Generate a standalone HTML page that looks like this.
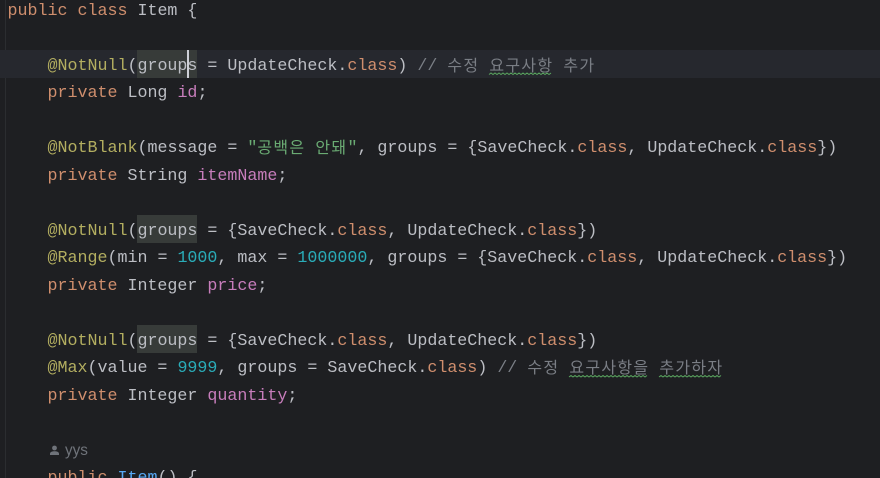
<!DOCTYPE html>
<html>
<head>
<meta charset="utf-8">
<style>
html,body{margin:0;padding:0;background:#1e1f22;}
#v{position:relative;width:880px;height:478px;overflow:hidden;background:#1e1f22;}
.l{position:absolute;left:7.5px;height:28px;line-height:28px;white-space:pre;font-family:"Liberation Mono",monospace;font-size:16.67px;color:#bcbec4;z-index:2;}
.k{color:#cf8e6d}.a{color:#b3ae60}.n{color:#2aacb8}.s{color:#6aab73}.f{color:#c77dbb}.c{color:#7a7e85}
.h{font-family:"Noto Sans CJK KR",sans-serif;font-size:16px;letter-spacing:1.28px;line-height:0;position:relative;top:1px;}
.hl{position:absolute;left:137px;width:60px;height:28px;background:#373b39;z-index:1;}
</style>
</head>
<body>
<div id="v">
<div style="position:absolute;left:5px;top:0;width:1px;height:478px;background:#2b2d30"></div>
<div style="position:absolute;left:0;top:50px;width:880px;height:28px;background:#26282e"></div>
<div class="hl" style="top:50px"></div>
<div class="hl" style="top:215px"></div>
<div class="hl" style="top:325px"></div>
<div style="position:absolute;left:187px;top:50px;width:2px;height:28px;background:#ced0d6;z-index:3"></div>

<div class="l" style="top:-2px"><span class="k">public class</span> Item {</div>
<div class="l" style="top:53px">    <span class="a">@NotNull</span>(groups = UpdateCheck.<span class="k">class</span>) <span class="c">// <span class="h">수정</span> <span class="h">요구사항</span> <span class="h">추가</span></span></div>
<div class="l" style="top:80px">    <span class="k">private</span> Long <span class="f">id</span>;</div>
<div class="l" style="top:135px">    <span class="a">@NotBlank</span>(message = <span class="s">"<span class="h">공백은</span> <span class="h">안돼</span>"</span>, groups = {SaveCheck.<span class="k">class</span>, UpdateCheck.<span class="k">class</span>})</div>
<div class="l" style="top:163px">    <span class="k">private</span> String <span class="f">itemName</span>;</div>
<div class="l" style="top:218px">    <span class="a">@NotNull</span>(groups = {SaveCheck.<span class="k">class</span>, UpdateCheck.<span class="k">class</span>})</div>
<div class="l" style="top:245px">    <span class="a">@Range</span>(min = <span class="n">1000</span>, max = <span class="n">1000000</span>, groups = {SaveCheck.<span class="k">class</span>, UpdateCheck.<span class="k">class</span>})</div>
<div class="l" style="top:273px">    <span class="k">private</span> Integer <span class="f">price</span>;</div>
<div class="l" style="top:328px">    <span class="a">@NotNull</span>(groups = {SaveCheck.<span class="k">class</span>, UpdateCheck.<span class="k">class</span>})</div>
<div class="l" style="top:355px">    <span class="a">@Max</span>(value = <span class="n">9999</span>, groups = SaveCheck.<span class="k">class</span>) <span class="c">// <span class="h">수정</span> <span class="h">요구사항을</span> <span class="h">추가하자</span></span></div>
<div class="l" style="top:383px">    <span class="k">private</span> Integer <span class="f">quantity</span>;</div>
<div class="l" style="top:437px;left:65px;font-family:'Liberation Sans',sans-serif;font-size:15.3px;color:#6f737a">yys</div>
<svg style="position:absolute;left:49px;top:445px;z-index:2" width="11" height="11" viewBox="0 0 11 11"><circle cx="5.5" cy="3" r="2.4" fill="#6f737a"/><path d="M1 10V8.6C1 7 3.5 6.3 5.5 6.3S10 7 10 8.6V10Z" fill="#6f737a"/></svg>
<div class="l" style="top:465px">    <span class="k">public</span> <span style="color:#56a8f5">Item</span>() {</div>

<svg style="position:absolute;left:0;top:0;z-index:3" width="880" height="478" fill="none" stroke="#5aa55f" stroke-width="1">
<path d="M489 74.5l2-1.5 2 1.5 2-1.5 2 1.5 2-1.5 2 1.5 2-1.5 2 1.5 2-1.5 2 1.5 2-1.5 2 1.5 2-1.5 2 1.5 2-1.5 2 1.5 2-1.5 2 1.5 2-1.5 2 1.5 2-1.5 2 1.5 2-1.5 2 1.5 2-1.5 2 1.5 2-1.5 2 1.5 2-1.5 2 1.5 2-1.5"/>
<path d="M569 377l2-1.5 2 1.5 2-1.5 2 1.5 2-1.5 2 1.5 2-1.5 2 1.5 2-1.5 2 1.5 2-1.5 2 1.5 2-1.5 2 1.5 2-1.5 2 1.5 2-1.5 2 1.5 2-1.5 2 1.5 2-1.5 2 1.5 2-1.5 2 1.5 2-1.5 2 1.5 2-1.5 2 1.5 2-1.5 2 1.5 2-1.5 2 1.5 2-1.5 2 1.5 2-1.5 2 1.5 2-1.5 2 1.5 2-1.5"/>
<path d="M659 377l2-1.5 2 1.5 2-1.5 2 1.5 2-1.5 2 1.5 2-1.5 2 1.5 2-1.5 2 1.5 2-1.5 2 1.5 2-1.5 2 1.5 2-1.5 2 1.5 2-1.5 2 1.5 2-1.5 2 1.5 2-1.5 2 1.5 2-1.5 2 1.5 2-1.5 2 1.5 2-1.5 2 1.5 2-1.5 2 1.5 2-1.5"/>
</svg>
</div>
</body>
</html>
